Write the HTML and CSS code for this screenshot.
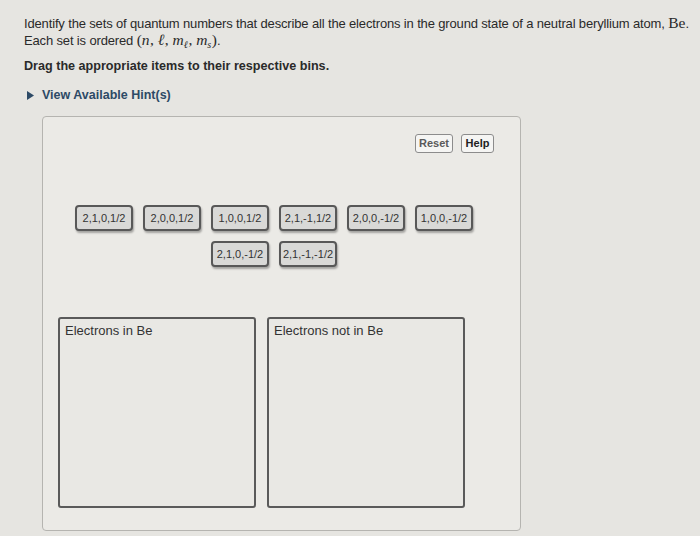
FILE: index.html
```html
<!DOCTYPE html>
<html>
<head>
<meta charset="utf-8">
<link rel="stylesheet" href="styles.css">
</head>
<body>
<div class="page">
  <p class="intro">Identify the sets of quantum numbers that describe all the electrons in the ground state of a neutral beryllium atom, <span class="math">Be</span>.<br>Each set is ordered <span class="math">(<i>n</i>, <i>ℓ</i>, <i>m<sub>ℓ</sub></i>, <i>m<sub>s</sub></i>)</span>.</p>
  <p class="instr">Drag the appropriate items to their respective bins.</p>
  <div class="hint"><svg class="tri" width="7" height="9" viewBox="0 0 7 9"><path d="M0 0 L7 4.5 L0 9 Z" fill="#2d4a66"/></svg><span>View Available Hint(s)</span></div>
  <div class="panel">
    <div class="toolbar">
      <span class="btn btn-reset">Reset</span>
      <span class="btn btn-help">Help</span>
    </div>
    <div class="chips">
      <span class="chip">2,1,0,1/2</span>
      <span class="chip">2,0,0,1/2</span>
      <span class="chip">1,0,0,1/2</span>
      <span class="chip">2,1,-1,1/2</span>
      <span class="chip">2,0,0,-1/2</span>
      <span class="chip">1,0,0,-1/2</span>
      <span class="chip">2,1,0,-1/2</span>
      <span class="chip">2,1,-1,-1/2</span>
    </div>
    <div class="bins">
      <div class="bin">Electrons in Be</div>
      <div class="bin">Electrons not in Be</div>
    </div>
  </div>
</div>
</body>
</html>
```
FILE: styles.css
```css
html, body {
  margin: 0;
  padding: 0;
  background: #e6e5e1;
}
body {
  font-family: "Liberation Sans", Arial, sans-serif;
  color: #2a2a2a;
}
.page {
  padding: 15px 0 0 24px;
}
.intro {
  margin: 0;
  font-size: 13px;
  line-height: 17px;
  letter-spacing: -0.15px;
  white-space: nowrap;
}
.math {
  font-family: "Liberation Serif", "DejaVu Serif", serif;
  font-size: 15.5px;
  line-height: 0;
  letter-spacing: 0;
}
.math i {
  margin-right: 0.5px;
}
.math sub {
  font-size: 10px;
  line-height: 0;
  vertical-align: -3px;
}
.instr {
  margin: 9px 0 0 0;
  font-size: 12.6px;
  line-height: 17px;
  font-weight: bold;
}
.hint {
  margin-top: 12px;
  display: flex;
  align-items: center;
  font-size: 12.5px;
  line-height: 17px;
  font-weight: bold;
  color: #2d4a66;
}
.tri {
  margin-left: 3px;
  margin-right: 8px;
}
.panel {
  margin: 12px 0 0 18px;
  width: 479px;
  height: 415px;
  box-sizing: border-box;
  border: 1px solid #b5b4b0;
  border-radius: 4px;
  background: #ebeae6;
  padding: 17px 26px 0 15px;
}
.toolbar {
  display: flex;
  justify-content: flex-end;
  gap: 8px;
}
.btn {
  height: 19px;
  box-sizing: border-box;
  border: 1px solid #8c8c8c;
  border-radius: 3px;
  background: #f5f5f3;
  font-size: 11px;
  line-height: 17px;
  font-weight: bold;
  padding: 0 3px;
  text-align: center;
}
.btn-reset {
  color: #5a5a5a;
  min-width: 38px;
}
.btn-help {
  color: #222;
  min-width: 33px;
}
.chips {
  margin: 52px 0 0 12px;
  width: 408px;
  display: flex;
  flex-wrap: wrap;
  justify-content: center;
  gap: 10px 10px;
}
.chip {
  width: 58px;
  height: 26px;
  box-sizing: border-box;
  border: 2px solid #585858;
  border-radius: 4px;
  background: #d9d9d7;
  box-shadow: 1px 2px 2px rgba(0, 0, 0, 0.3);
  font-size: 11px;
  line-height: 22px;
  text-align: center;
  color: #333;
}
.bins {
  margin: 50px 0 0 0;
  display: flex;
  gap: 11px;
}
.bin {
  width: 198px;
  height: 191px;
  box-sizing: border-box;
  border: 2px solid #5a5a5a;
  border-radius: 3px;
  background: #e9e8e4;
  padding: 3px 0 0 5px;
  font-size: 13px;
  line-height: 17px;
  color: #333;
}
```
